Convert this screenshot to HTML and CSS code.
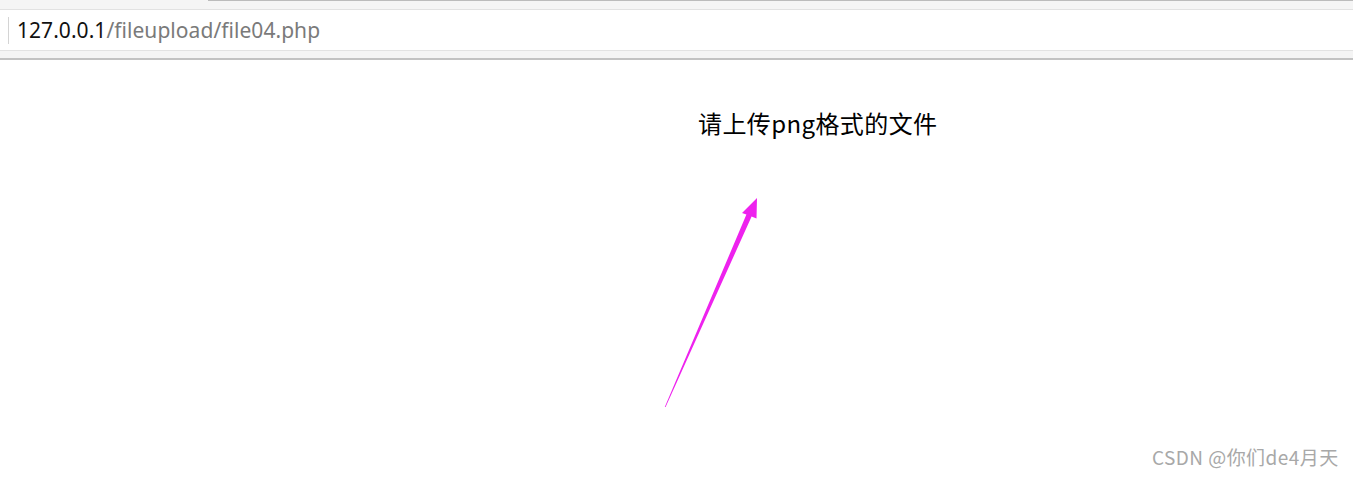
FILE: index.html
```html
<!DOCTYPE html>
<html lang="zh">
<head>
<meta charset="utf-8">
<title>file04</title>
<link rel="stylesheet" href="styles.css">
</head>
<body>
<div class="chrome">
  <div class="tabstrip"><div class="tab-gap"></div><div class="tab-rest"></div></div>
  <div class="addressbar">
    <span class="sep"></span>
    <span class="url"><span class="host">127.0.0.1</span><span class="path">/fileupload/file04.php</span></span>
  </div>
  <div class="toolbar"></div>
</div>
<main class="page">
  <h3 class="notice">请上传png格式的文件</h3>
</main>
<svg class="arrow" width="1353" height="477" viewBox="0 0 1353 477" xmlns="http://www.w3.org/2000/svg">
  <polygon fill="#ee22ee" points="757,198 756.5,218.5 751.6,216.6 665.6,407 664.8,407 746.4,214.6 742,213"/>
</svg>
<div class="watermark">CSDN @你们de4月天</div>
</body>
</html>
```
FILE: styles.css
```css
html, body {
  margin: 0;
  padding: 0;
  background: #ffffff;
  width: 1353px;
  height: 477px;
  overflow: hidden;
  position: relative;
  font-family: "Noto Sans", "Noto Sans CJK SC", sans-serif;
}
.chrome {
  display: flex;
  flex-direction: column;
}
.tabstrip {
  display: flex;
  height: 9px;
  background: #f5f5f5;
  border-bottom: 1px solid #e2e2e2;
}
.tab-gap {
  width: 208px;
}
.tab-rest {
  flex: 1;
  border-top: 1px solid #bcbcbc;
}
.addressbar {
  display: flex;
  align-items: center;
  height: 40px;
  background: #ffffff;
}
.sep {
  width: 1px;
  height: 27px;
  background: #d4d4d4;
  margin-left: 8px;
  margin-right: 8px;
}
.url {
  font-size: 21px;
  line-height: 28px;
  letter-spacing: 0.05px;
}
.host {
  color: #111111;
}
.path {
  color: #7a7a7a;
}
.toolbar {
  height: 7px;
  background: #f4f4f4;
  border-top: 1px solid #e2e2e2;
  border-bottom: 2px solid #c2c2c2;
}
.page {
  display: flex;
  padding-top: 47px;
  padding-left: 698px;
}
.notice {
  margin: 0;
  font-family: "Noto Sans CJK SC", sans-serif;
  font-weight: normal;
  font-size: 24px;
  line-height: 32px;
  letter-spacing: 0.4px;
  color: #000000;
}
.arrow {
  position: absolute;
  left: 0;
  top: 0;
  pointer-events: none;
}
.watermark {
  position: absolute;
  left: 1152px;
  top: 444px;
  font-family: "Noto Sans CJK SC", sans-serif;
  font-size: 19px;
  line-height: 26px;
  letter-spacing: 0.45px;
  color: #a8a8a8;
  white-space: nowrap;
}
```
